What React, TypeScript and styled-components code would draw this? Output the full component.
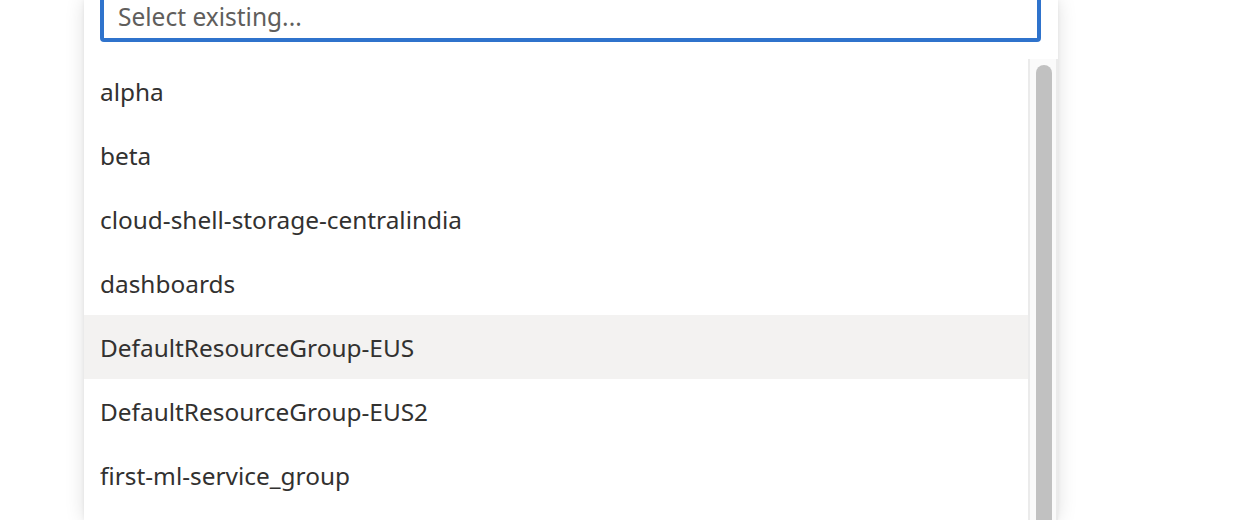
import React from "react";
import styled, { createGlobalStyle } from "styled-components";

const Global = createGlobalStyle`
  html, body { margin: 0; padding: 0; background: #ffffff; }
  body { font-family: "Noto Sans", "Open Sans", sans-serif; overflow: hidden; }
  #root { height: 520px; }
`;

const Page = styled.div`
  height: 520px;
  display: flex;
  padding-left: 84px;
  box-sizing: border-box;
  overflow: hidden;
`;

const Panel = styled.div`
  width: 974px;
  background: #ffffff;
  box-shadow: 0 0 18px rgba(0, 0, 0, 0.13), 0 0 4px rgba(0, 0, 0, 0.06);
  display: flex;
  flex-direction: column;
`;

const Header = styled.div`
  padding: 0 17px 17px 16px;
  margin-top: -24px;
`;

const SearchBox = styled.div`
  height: 66px;
  border: 4px solid #2f73cc;
  border-radius: 4px;
  box-sizing: border-box;
  display: flex;
  align-items: flex-end;
  padding: 0 14px 6px;
`;

const Placeholder = styled.span`
  font-size: 24.5px;
  line-height: 30px;
  color: #605e5c;
`;

const ListArea = styled.div`
  flex: 1;
  display: flex;
  min-height: 0;
`;

const Items = styled.div`
  flex: 1;
  display: flex;
  flex-direction: column;
`;

const Item = styled.div<{ $active?: boolean }>`
  height: 64px;
  flex: none;
  display: flex;
  align-items: center;
  padding-left: 16px;
  font-size: 24.4px;
  color: #323130;
  background: ${(p) => (p.$active ? "#f3f2f1" : "transparent")};
`;

const Track = styled.div`
  width: 30px;
  flex: none;
  box-sizing: border-box;
  background: #fafafa;
  border-left: 2px solid #ebebeb;
  border-right: 2px solid #ebebeb;
  padding: 6px 0 0 6px;
`;

const Thumb = styled.div`
  width: 16px;
  height: 100%;
  background: #c1c1c1;
  border-radius: 8px 8px 0 0;
`;

const items = [
  "alpha",
  "beta",
  "cloud-shell-storage-centralindia",
  "dashboards",
  "DefaultResourceGroup-EUS",
  "DefaultResourceGroup-EUS2",
  "first-ml-service_group",
];

export default function App() {
  return (
    <>
      <Global />
      <Page>
        <Panel>
          <Header>
            <SearchBox>
              <Placeholder>Select existing...</Placeholder>
            </SearchBox>
          </Header>
          <ListArea>
            <Items>
              {items.map((t) => (
                <Item key={t} $active={t === "DefaultResourceGroup-EUS"}>
                  {t}
                </Item>
              ))}
            </Items>
            <Track>
              <Thumb />
            </Track>
          </ListArea>
        </Panel>
      </Page>
    </>
  );
}
